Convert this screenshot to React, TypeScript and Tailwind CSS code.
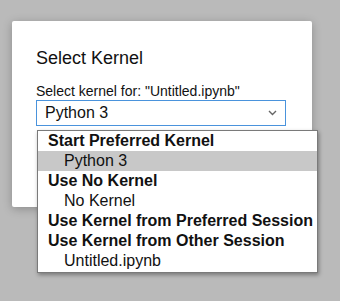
import React from "react";

type Row = { label: string; header?: boolean; active?: boolean };

const rows: Row[] = [
  { label: "Start Preferred Kernel", header: true },
  { label: "Python 3", active: true },
  { label: "Use No Kernel", header: true },
  { label: "No Kernel" },
  { label: "Use Kernel from Preferred Session", header: true },
  { label: "Use Kernel from Other Session", header: true },
  { label: "Untitled.ipynb" },
];

const App = () => {
  return (
    <div
      className="relative w-[340px] h-[301px] bg-[#bababa] overflow-hidden text-[#111]"
      style={{ fontFamily: '"Liberation Sans", Arial, sans-serif' }}
    >
      <div className="absolute left-[12px] top-[21px] w-[300px] h-[186px] bg-white rounded-[2px] shadow-[0_2px_10px_rgba(0,0,0,0.25)] pl-[24px] pt-[27px]">
        <div className="text-[18px] leading-[21px]">Select Kernel</div>
        <div className="mt-[14px] text-[14px] leading-[16px]">
          Select kernel for: "Untitled.ipynb"
        </div>
        <div className="mt-[1px] w-[250px] h-[26px] border border-[#4a93dc] flex items-center justify-between pl-[8px] pr-[8px]">
          <span className="text-[16px] leading-[20px]">Python 3</span>
          <svg width="9" height="6" viewBox="0 0 9 6" fill="none">
            <path d="M1 1l3.5 3.5L8 1" stroke="#666" strokeWidth="1.4" />
          </svg>
        </div>
      </div>

      {/* dropdown list */}
      <div className="absolute left-[37px] top-[130px] w-[281px] bg-white border border-[#7a7a7a] pb-[1px] shadow-[1px_2px_4px_rgba(0,0,0,0.35)]">
        {rows.map((r) => (
          <div
            key={r.label}
            className={`h-[20px] text-[16px] leading-[20px] whitespace-nowrap ${
              r.header ? "font-bold pl-[10px]" : "pl-[26px]"
            } ${r.active ? "bg-[#c8c8c8]" : ""}`}
          >
            {r.label}
          </div>
        ))}
      </div>
    </div>
  );
};

export default App;
